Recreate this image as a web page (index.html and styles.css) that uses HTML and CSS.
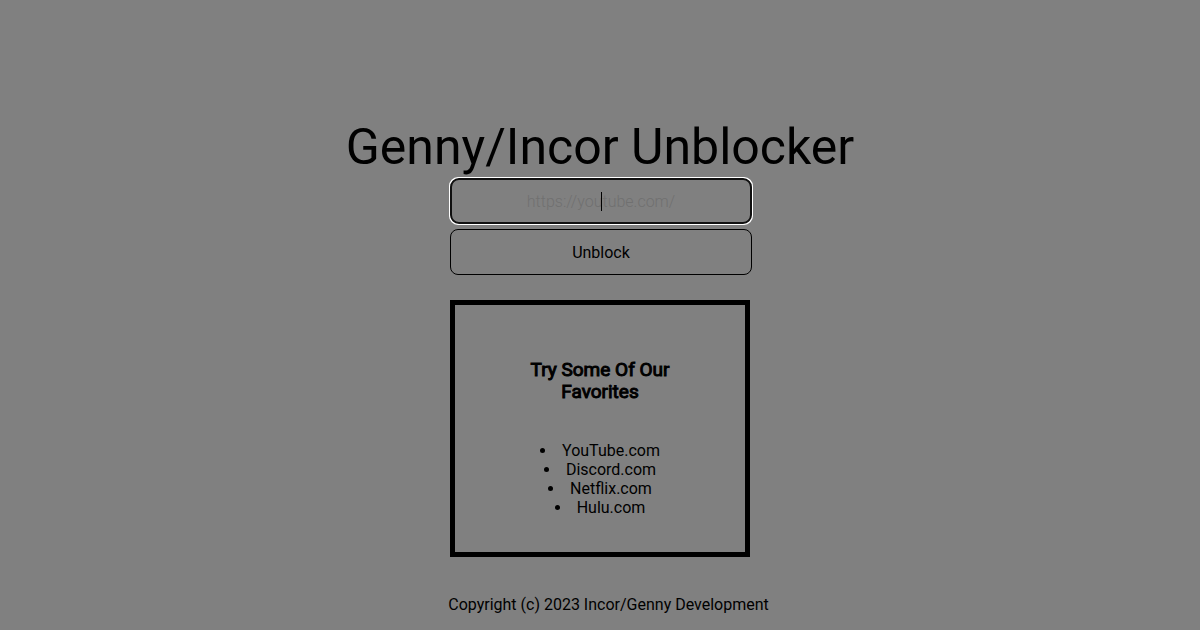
FILE: index.html
```html
<!DOCTYPE html>
<html lang="en">
<head>
  <meta charset="UTF-8">
  <meta name="viewport" content="width=device-width, initial-scale=1.0">
  <title>Genny/Incor Unblocker</title>
  <link rel="stylesheet" href="styles.css">
</head>
<body>
  <div class="title">Genny/Incor Unblocker</div>

  <form class="unblock-form">
    <div class="url-field">
      <input type="text" class="url-input" placeholder="https://youtube.com/" aria-label="Site address" autofocus>
    </div>
    <button type="button" class="unblock-btn">Unblock</button>
  </form>

  <!-- Favorites -->
  <div class="favorites">
    <h3>Try Some Of Our Favorites</h3>
    <ul>
      <li>YouTube.com</li>
      <li>Discord.com</li>
      <li>Netflix.com</li>
      <li>Hulu.com</li>
    </ul>
  </div>

  <footer class="footer">Copyright (c) 2023 Incor/Genny Development</footer>
</body>
</html>
```
FILE: styles.css
```css
body {
  margin: 0;
  padding-top: 116px;
  background-color: #808080;
  color: #000;
  font-family: Roboto, sans-serif;
  font-size: 16px;
  text-align: center;
  display: flex;
  flex-direction: column;
  align-items: center;
}

.title {
  font-size: 50px;
  line-height: 62px;
}

.unblock-form {
  display: flex;
  flex-direction: column;
  gap: 5px;
  width: 300px;
}

.url-field {
  display: flex;
  position: relative;
  width: 302px;
}

.url-input,
.unblock-btn {
  box-sizing: border-box;
  width: 302px;
  height: 46px;
  padding: 0;
  border: 1px solid #000;
  border-radius: 8px;
  background: transparent;
  color: #000;
  font-family: inherit;
  font-size: 16px;
  text-align: center;
}

.url-input {
  caret-color: transparent;
}

.url-input::placeholder {
  color: #707070;
  font-weight: 300;
}

/* steady caret while the box is empty */
.url-field:has(.url-input:placeholder-shown)::after {
  content: "";
  position: absolute;
  top: 14px;
  left: 50%;
  width: 1px;
  height: 19px;
  background-color: #000;
  pointer-events: none;
}

.unblock-btn {
  cursor: pointer;
}

.favorites {
  box-sizing: border-box;
  width: 300px;
  margin-top: 25px;
  padding: 54px 50px 35px;
  border: 5px solid #000;
}

.favorites h3 {
  margin: 0 0 38px;
  font-size: 19px;
  font-weight: 400;
  line-height: 22px;
  -webkit-text-stroke: 1px #000;
}

.favorites ul {
  margin: 0;
  padding: 0;
  list-style-position: inside;
}

.favorites li {
  line-height: 19px;
}

.footer {
  margin-top: 38px;
  padding-left: 17px;
  line-height: 19px;
}
```
